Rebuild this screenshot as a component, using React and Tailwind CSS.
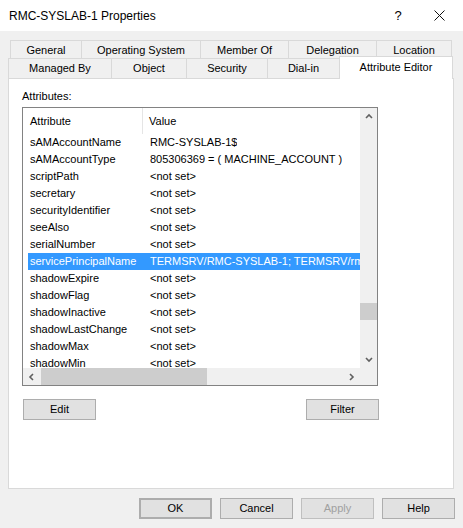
import React from "react";

const rows = [
  ["sAMAccountName", "RMC-SYSLAB-1$"],
  ["sAMAccountType", "805306369 = ( MACHINE_ACCOUNT )"],
  ["scriptPath", "<not set>"],
  ["secretary", "<not set>"],
  ["securityIdentifier", "<not set>"],
  ["seeAlso", "<not set>"],
  ["serialNumber", "<not set>"],
  ["servicePrincipalName", "TERMSRV/RMC-SYSLAB-1; TERMSRV/rm"],
  ["shadowExpire", "<not set>"],
  ["shadowFlag", "<not set>"],
  ["shadowInactive", "<not set>"],
  ["shadowLastChange", "<not set>"],
  ["shadowMax", "<not set>"],
  ["shadowMin", "<not set>"],
];

const topTabs = [
  ["General", "w-[72px]"],
  ["Operating System", "w-[119px]"],
  ["Member Of", "w-[88px]"],
  ["Delegation", "w-[88px]"],
  ["Location", "w-[75px]"],
];

const bottomTabs = [
  ["Managed By", "w-[104px]"],
  ["Object", "w-[75px]"],
  ["Security", "w-[81px]"],
  ["Dial-in", "w-[72px]"],
];

const Chevron = ({ dir }) => {
  const pts = {
    up: "1,5 4,2 7,5",
    down: "1,2 4,5 7,2",
    left: "5,1 2,4 5,7",
    right: "2,1 5,4 2,7",
  }[dir];
  return (
    <svg width="8" height="8" viewBox="0 0 8 8">
      <polyline points={pts} fill="none" stroke="#606060" strokeWidth="1.6" />
    </svg>
  );
};

const Button = ({ children, className = "" }) => (
  <div
    className={`w-[73px] h-[21px] flex items-center justify-center bg-[#e1e1e1] border border-[#adadad] ${className}`}
  >
    {children}
  </div>
);

export default function App() {
  return (
    <div className="w-[463px] h-[528px] overflow-hidden bg-[#f0f0f0] text-[11px] text-black font-['Liberation_Sans',Arial,sans-serif] leading-none">
      {/* Title bar */}
      <div className="h-[31px] bg-white flex items-center">
        <div className="pl-[9px] text-[12px] flex-1">RMC-SYSLAB-1 Properties</div>
        <div className="w-[20px] text-center text-[13px] mr-[26px]">?</div>
        <div className="mr-[18px] flex items-center">
          <svg width="11" height="11" viewBox="0 0 11 11">
            <path d="M0.5 0.5 L10.5 10.5 M10.5 0.5 L0.5 10.5" stroke="#111" strokeWidth="1" />
          </svg>
        </div>
      </div>

      {/* Tabs */}
      <div className="pt-[9px]">
        <div className="flex ml-[10px] h-[18px]">
          {topTabs.map(([label, w], i) => (
            <div
              key={label}
              className={`${w} h-full flex items-center justify-center pt-[2px] border-t border-[#d9d9d9] ${
                i === 0 ? "border-l" : ""
              } border-r`}
            >
              {label}
            </div>
          ))}
        </div>
        <div className="flex ml-[8px] h-[20px] items-end">
          {bottomTabs.map(([label, w], i) => (
            <div
              key={label}
              className={`${w} h-full flex items-center justify-center border-t border-[#d9d9d9] ${
                i === 0 ? "border-l" : ""
              } border-r`}
            >
              {label}
            </div>
          ))}
          <div className="relative top-[1px] z-10 w-[114px] h-[23px] -ml-[1px] bg-white border-t border-l border-r border-[#d9d9d9] flex justify-center pt-[5px]">
            Attribute Editor
          </div>
        </div>
      </div>

      {/* Panel */}
      <div className="ml-[8px] w-[446px] h-[411px] bg-white border border-[#d9d9d9] pl-[13px]">
        <div className="pt-[12px] h-[28px]">Attributes:</div>

        <div className="w-[356px] h-[279px] border border-[#828282] flex flex-col">
          <div className="flex h-[260px]">
            <div className="w-[337px] overflow-hidden">
              <div className="h-[26px] flex items-center">
                <div className="w-[120px] h-full flex items-center pl-[7px] border-r border-[#e5e5e5]">
                  Attribute
                </div>
                <div className="pl-[6px]">Value</div>
              </div>
              <div className="pl-[5px]">
                {rows.map(([name, value]) => {
                  const sel = name === "servicePrincipalName";
                  return (
                    <div
                      key={name}
                      className={`h-[17px] flex items-center whitespace-nowrap ${
                        sel ? "bg-[#3399ff] text-white" : ""
                      }`}
                    >
                      <div className="w-[115px] shrink-0 pl-[2px]">{name}</div>
                      <div className="pl-[7px] overflow-hidden">{value}</div>
                    </div>
                  );
                })}
              </div>
            </div>
            <div className="w-[17px] bg-[#f0f0f0] flex flex-col">
              <div className="h-[17px] flex items-center justify-center">
                <Chevron dir="up" />
              </div>
              <div className="h-[178px]" />
              <div className="h-[17px] bg-[#cdcdcd]" />
              <div className="flex-1" />
              <div className="h-[17px] flex items-center justify-center">
                <Chevron dir="down" />
              </div>
            </div>
          </div>
          <div className="flex flex-1 bg-[#f0f0f0]">
            <div className="w-[17px] flex items-center justify-center">
              <Chevron dir="left" />
            </div>
            <div className="ml-[1px] w-[166px] bg-[#cdcdcd]" />
            <div className="flex-1" />
            <div className="w-[17px] flex items-center justify-center">
              <Chevron dir="right" />
            </div>
            <div className="w-[17px]" />
          </div>
        </div>

        <div className="w-[357px] mt-[13px] flex justify-between">
          <Button className="ml-[1px]">Edit</Button>
          <Button>Filter</Button>
        </div>
      </div>

      {/* Dialog buttons */}
      <div className="mt-[9px] flex justify-end gap-[8px] pr-[8px]">
        <Button className="border-2 border-[#0078d7]">OK</Button>
        <Button>Cancel</Button>
        <Button className="bg-[#cccccc] border-[#bfbfbf] text-[#a0a0a0]">Apply</Button>
        <Button>Help</Button>
      </div>
    </div>
  );
}
